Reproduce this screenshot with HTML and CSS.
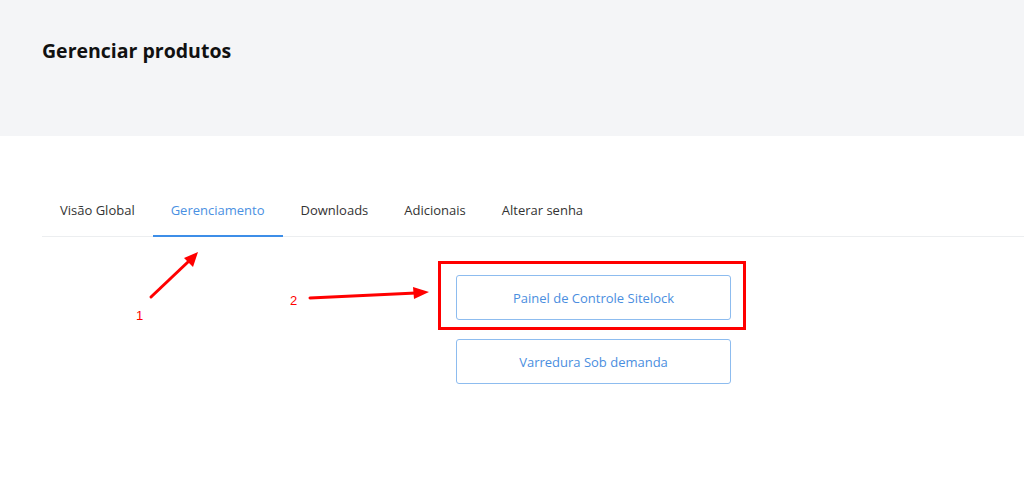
FILE: index.html
```
<!DOCTYPE html>
<html lang="pt-BR">
<head>
    <meta charset="UTF-8">
    <title>Gerenciar produtos</title>
    <link rel="stylesheet" href="styles.css">
</head>
<body>
    <div class="page-header">
        <h1>Gerenciar produtos</h1>
    </div>
    <div class="page-body">
        <ul class="tabs">
            <li><a href="#">Visão Global</a></li>
            <li class="active"><a href="#">Gerenciamento</a></li>
            <li><a href="#">Downloads</a></li>
            <li><a href="#">Adicionais</a></li>
            <li><a href="#">Alterar senha</a></li>
        </ul>
        <div class="actions">
            <button type="button" class="action-btn">Painel de Controle Sitelock</button>
            <button type="button" class="action-btn">Varredura Sob demanda</button>
        </div>
    </div>

    <!-- annotations -->
    <div class="mark-box"></div>
    <span class="mark-num num-1">1</span>
    <span class="mark-num num-2">2</span>
    <svg class="mark-arrows" width="1024" height="495" viewBox="0 0 1024 495">
        <g stroke="#ff0000" stroke-width="3" stroke-linecap="round">
            <line x1="151" y1="297" x2="189" y2="261"/>
            <line x1="310" y1="298" x2="416" y2="293"/>
        </g>
        <g fill="#ff0000">
            <polygon points="198,252 184,258 193,267"/>
            <polygon points="429,292 413,287 414,299"/>
        </g>
    </svg>
</body>
</html>
```

FILE: styles.css
```
*{margin:0;padding:0;box-sizing:border-box;}
body{background:#fff;font-family:"Open Sans", Arial, sans-serif;color:#333;min-height:495px;position:relative;overflow:hidden;}
.page-header{background:#f4f5f7;height:136px;padding:38px 42px 0;}
.page-header h1{font-size:19.5px;line-height:26px;font-weight:700;color:#111;}
.page-body{padding:49px 0 0 42px;}
.tabs{list-style:none;display:flex;border-bottom:1px solid #eceef0;}
.tabs li a{display:block;padding:15px 18px 15px;line-height:20px;font-size:13px;color:#333;text-decoration:none;border-bottom:2px solid transparent;margin-bottom:-1px;}
.tabs li.active a{color:#4a90e2;border-bottom-color:#3d8ee8;}
.actions{display:flex;flex-direction:column;gap:19px;width:275px;margin:38px 0 0 414px;}
.action-btn{height:45px;background:#fff;border:1px solid #8dbcef;border-radius:3px;color:#4a8ee0;font-family:"Open Sans", Arial, sans-serif;font-size:13px;cursor:pointer;}
.mark-box{position:absolute;left:438px;top:261px;width:308px;height:69px;border:3px solid #ff0000;}
.mark-num{position:absolute;font-family:"Liberation Sans", Arial, sans-serif;font-size:13px;line-height:14px;color:#ff0000;}
.num-1{left:136px;top:309px;}
.num-2{left:290px;top:294px;}
.mark-arrows{position:absolute;left:0;top:0;pointer-events:none;}
```
